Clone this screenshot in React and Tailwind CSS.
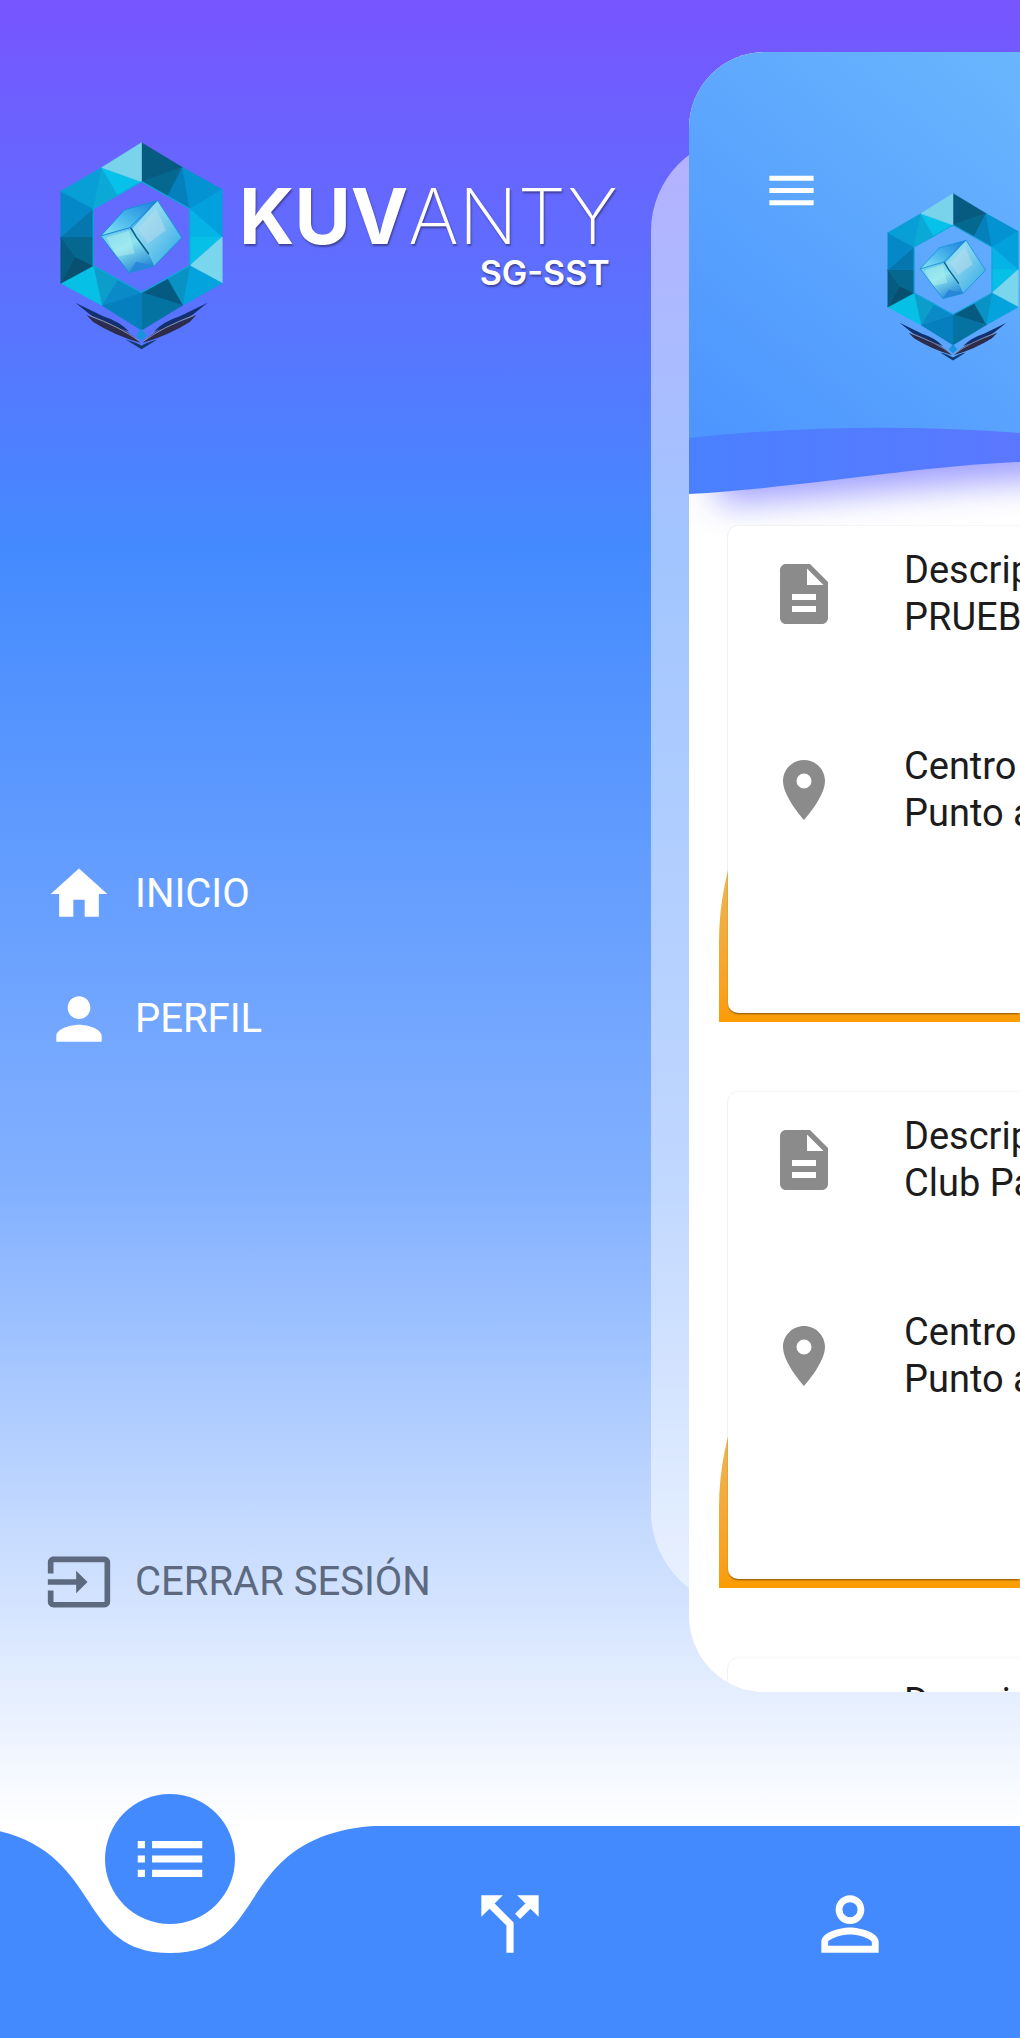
import { useState } from 'react';
import {
  MdCallSplit,
  MdDescription,
  MdHome,
  MdInput,
  MdList,
  MdLocationOn,
  MdMenu,
  MdPerson,
  MdPersonOutline,
} from 'react-icons/md';

const menuItems = [
  { id: 'inicio', label: 'INICIO', icon: MdHome },
  { id: 'perfil', label: 'PERFIL', icon: MdPerson },
];

const tabs = [
  { id: 'list',    label: 'Listado', icon: MdList },
  { id: 'split',   label: 'Rutas',   icon: MdCallSplit },
  { id: 'profile', label: 'Perfil',  icon: MdPersonOutline },
];

const cards = [
  { id: 1, description: 'PRUEBA', center: 'Punto a' },
  { id: 2, description: 'Club Pa', center: 'Punto a' },
  { id: 3, description: 'PRUEBA', center: 'Punto a' },
];

// Facets of the hexagon ring, clockwise from the top
const facets = [
  ['306,65 430,140 306,183', '#075a80'],
  ['430,140 385,227 306,183', '#04688f'],
  ['430,140 452,265 385,227', '#0580bd'],
  ['430,140 550,207 452,265', '#0393d2'],
  ['550,207 550,350 452,265', '#02a0dc'],
  ['452,265 550,350 452,350', '#05b3e6'],
  ['550,350 452,437 452,350', '#06c0e8'],
  ['550,350 550,490 452,437', '#7ad6ec'],
  ['550,490 430,557 452,437', '#03a4dd'],
  ['452,437 430,557 385,478', '#0893c4'],
  ['385,478 430,557 306,518', '#045a80'],
  ['306,518 430,557 306,632', '#0473a2'],
  ['306,518 306,632 186,557', '#067fbe'],
  ['306,518 186,557 235,478', '#0b8ac8'],
  ['235,478 160,437 186,557', '#0c9dca'],
  ['160,437 186,557 62,490', '#06c0e6'],
  ['62,490 105,410 160,437', '#07506f'],
  ['62,350 105,410 62,490', '#055b80'],
  ['62,350 160,350 160,437 105,410', '#06678f'],
  ['62,350 160,265 160,350', '#0677ae'],
  ['62,212 160,265 62,350', '#0588c8'],
  ['62,212 186,140 160,265', '#089ed6'],
  ['186,140 235,225 160,265', '#0ba9d6'],
  ['186,140 306,183 235,225', '#06c2ea'],
  ['186,140 306,65 306,183', '#79d3ea'],
];

function Emblem({ className, id }) {
  return (
    <svg viewBox="60 63 492 629" className={className} aria-hidden="true">
      <defs>
        <linearGradient id={`${id}-top`} x1="0" y1="1" x2="1" y2="0">
          <stop offset="0" stopColor="#8be6f7" />
          <stop offset="0.5" stopColor="#45b4ea" />
          <stop offset="1" stopColor="#1d7fdc" />
        </linearGradient>
        <linearGradient id={`${id}-left`} x1="0" y1="0" x2="0.6" y2="1">
          <stop offset="0" stopColor="#5cc4ea" />
          <stop offset="0.5" stopColor="#8fe3ee" />
          <stop offset="1" stopColor="#2b8fd8" />
        </linearGradient>
        <linearGradient id={`${id}-right`} x1="0" y1="0" x2="1" y2="1">
          <stop offset="0" stopColor="#a8ecf5" />
          <stop offset="0.45" stopColor="#7fcfee" />
          <stop offset="1" stopColor="#27a6e4" />
        </linearGradient>
      </defs>

      {facets.map(([points, fill]) => (
        <polygon key={points} points={points} fill={fill} stroke={fill} strokeWidth="2" strokeLinejoin="round" />
      ))}
      <polygon points="306,183 452,265 452,437 306,518 160,437 160,265" fill="none" stroke="#12a5dd" strokeWidth="4" />

      {/* Cube */}
      <polygon points="183,347 255,268 355,240 278,325" fill={`url(#${id}-top)`} />
      <polygon points="183,347 278,325 330,402 345,438 268,458" fill={`url(#${id}-left)`} />
      <polygon points="278,325 355,240 428,352 345,438 328,402" fill={`url(#${id}-right)`} />
      <polygon points="268,458 290,425 345,438" fill="#2a86da" />
      <polygon points="200,352 268,332 285,400 232,410" fill="#b4f1f1" opacity="0.45" />
      <polygon points="295,325 350,265 380,330 325,370" fill="#b9dcec" opacity="0.5" />
      <polyline points="183,347 270,322 355,240" fill="none" stroke="#1789cf" strokeWidth="3" />
      <polyline points="273,322 290,350 328,402" fill="none" stroke="#0b5f86" strokeWidth="5" />
      <polygon points="183,347 255,268 355,240 428,352 345,438 268,458" fill="none" stroke="#1690dc" strokeWidth="3" />

      {/* Wings */}
      <path d="M106 549 L190 590 Q240 606 268 636 Q215 620 160 592 Z" fill="#12306f" />
      <path d="M506 549 L422 590 Q372 606 344 636 Q397 620 452 592 Z" fill="#12306f" />
      <path d="M140 586 L215 617 Q265 630 302 670 Q225 648 160 607 Z" fill="#2d2c4c" />
      <path d="M472 586 L397 617 Q347 630 310 670 Q387 648 452 607 Z" fill="#2d2c4c" />
      <path d="M150 588 Q240 622 298 664 M462 588 Q372 622 314 664" fill="none" stroke="#8e93a8" strokeWidth="3" />
      <path d="M258 660 Q290 668 306 679 Q322 668 354 660 L306 690 Z" fill="#103a6b" />
      <polygon points="306,628 322,648 306,664 290,648" fill="#1695dc" />
    </svg>
  );
}

function Card({ description, center }) {
  const rows = [
    { icon: MdDescription, title: 'Descripción', text: description },
    { icon: MdLocationOn, title: 'Centro', text: center },
  ];

  return (
    <li className="relative h-[487px] shrink-0">
      <div className="absolute top-[126px] right-0 -bottom-[9px] -left-[9px] rounded-tl-[290px] bg-linear-to-b from-[#d6d6a0] via-[#ecb650] via-60% to-[#fb9c00]" />
      <div className="relative flex h-full flex-col gap-[102px] rounded-l-[10px] bg-white pt-[21px] pl-10 shadow-[0_2px_2px_-1px_rgba(0,0,0,0.45),0_0_2px_rgba(0,0,0,0.12)]">
        {rows.map(({ icon: Icon, title, text }) => (
          <div key={title} className="flex items-center gap-16">
            <Icon className="size-[72px] shrink-0 text-[#8b8b8b]" />
            <p className="text-[38px] leading-[47px] whitespace-nowrap text-[#1c1c1c]">
              {title}
              <br />
              {text}
            </p>
          </div>
        ))}
      </div>
    </li>
  );
}

function HeaderWave() {
  return (
    <svg
      viewBox="0 0 331 442"
      preserveAspectRatio="none"
      className="absolute top-0 left-0 h-[442px] w-full overflow-visible"
      aria-hidden="true"
    >
      <defs>
        <linearGradient id="sky" gradientUnits="userSpaceOnUse" x1="0" y1="400" x2="331" y2="0">
          <stop offset="0" stopColor="#4c94ff" />
          <stop offset="1" stopColor="#6ab6fd" />
        </linearGradient>
        <linearGradient id="wave" x1="0" y1="0" x2="1" y2="0">
          <stop offset="0" stopColor="#4a80ff" />
          <stop offset="1" stopColor="#5a78ff" />
        </linearGradient>
        <filter id="glow" x="-30%" y="-80%" width="160%" height="300%">
          <feGaussianBlur stdDeviation="17" />
        </filter>
      </defs>
      <path d="M28 380 L28 450 C110 448 230 432 400 424 L400 380 Z" fill="#5c5cff" opacity="0.6" filter="url(#glow)" />
      <path d="M0 370 H331 V410 C230 414 110 436 0 442 Z" fill="url(#wave)" />
      <path d="M0 0 H331 V381 C220 373 110 374 0 386 Z" fill="url(#sky)" />
    </svg>
  );
}

export default function App() {
  const [tab, setTab] = useState('list');
  const [open, setOpen] = useState(true);

  return (
    <div className="flex h-screen flex-col overflow-hidden bg-white font-[Roboto,sans-serif]">
      <main className="flex min-h-0 flex-1 bg-[linear-gradient(to_bottom,#7755ff_0%,#448aff_30%,#82b0ff_65%,#ffffff_100%)]">

        {/* Drawer */}
        <aside className="flex w-[651px] shrink-0 flex-col pt-[142px] pb-[182px]">
          <div className="flex items-start gap-4 pl-[60px] font-[Inter,sans-serif] text-white">
            <Emblem id="drawer" className="h-[208px] w-[163px] shrink-0" />
            <div className="mt-11 flex flex-col items-end [text-shadow:1px_2px_2px_rgba(40,40,90,0.6)]">
              <div className="flex text-[77px] leading-[60px]">
                <span className="font-bold">KUV</span>
                <span className="font-extralight">ANTY</span>
              </div>
              <div className="mt-[10px] pr-2 text-[34px] leading-[34px] font-semibold">SG-SST</div>
            </div>
          </div>

          <nav className="mt-[481px] flex flex-col">
            {menuItems.map(({ id, label, icon: Icon }) => (
              <a key={id} href={`#${id}`} className="flex h-[125px] items-center gap-[22px] pl-[45px] text-[40px] text-white">
                <Icon className="size-[68px]" />
                {label}
              </a>
            ))}
          </nav>

          <button className="mt-auto flex h-[125px] items-center gap-[22px] pl-[45px] text-[40px] text-[#5c697f]">
            <MdInput className="size-[68px]" />
            CERRAR SESIÓN
          </button>
        </aside>

        {/* Page pushed aside by the drawer */}
        <div className="relative flex min-w-0 flex-1 pt-[52px] pb-[134px] pl-[38px]">
          <div className="absolute top-[136px] right-0 bottom-[219px] left-0 rounded-l-[95px] bg-white/50" />
          <section className="relative min-w-0 flex-1 overflow-hidden rounded-l-[76px] bg-white">
            <header className="relative flex h-[474px] items-start gap-[66px] pl-[73px]">
              <HeaderWave />
              <button
                className="relative mt-[109px] shrink-0 text-white"
                aria-label="Menú"
                aria-expanded={open}
                onClick={() => setOpen(!open)}
              >
                <MdMenu className="size-[59px]" />
              </button>
              <Emblem id="page" className="relative mt-[141px] h-[168px] w-[132px] shrink-0" />
            </header>
            <ul className="relative flex flex-col gap-[79px] pl-[39px]">
              {cards.map((card) => (
                <Card key={card.id} description={card.description} center={card.center} />
              ))}
            </ul>
          </section>
        </div>
      </main>

      {/* Bottom bar */}
      <nav className="relative grid h-[212px] shrink-0 grid-cols-3">
        <svg
          viewBox="0 0 1020 212"
          preserveAspectRatio="none"
          className="absolute inset-0 h-full w-full"
          aria-hidden="true"
        >
          <path
            d="M-34 0 C109 10.6 68 127 170 127 C272 127 231 10.6 374 0 H1020 V212 H-34 Z"
            fill="#448aff"
          />
        </svg>
        {tabs.map(({ id, label, icon: Icon }) => (
          <button
            key={id}
            aria-label={label}
            onClick={() => setTab(id)}
            className={`relative flex size-[130px] items-center justify-center justify-self-center rounded-full text-white ${
              tab === id ? '-mt-8 bg-[#448aff]' : 'mt-[33px]'
            }`}
          >
            <Icon className="size-[86px]" />
          </button>
        ))}
      </nav>
    </div>
  );
}
